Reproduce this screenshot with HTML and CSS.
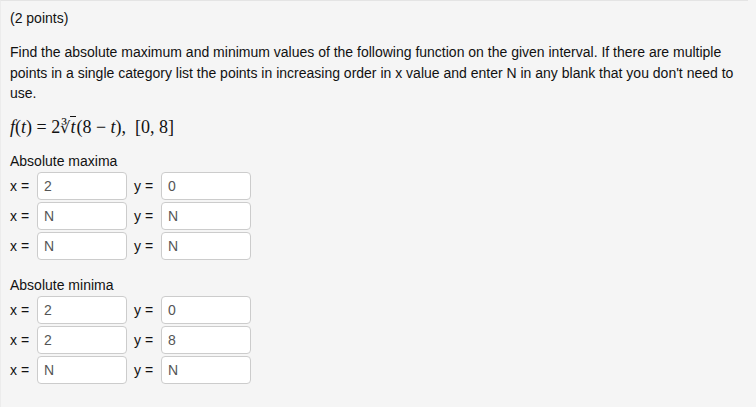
FILE: index.html
```html
<!DOCTYPE html>
<html lang="en">
  <head>
    <meta charset="UTF-8" />
    <meta name="viewport" content="width=device-width, initial-scale=1.0" />
    <title>Absolute extrema</title>
    <link rel="stylesheet" href="styles.css">
  </head>
  <body>
    <div class="problem">
      <!-- Header -->
      <p class="points">(2 points)</p>
      <!-- Question -->
      <p class="question">Find the absolute maximum and minimum values of the following function on the given interval. If there are multiple points in a single category list the points in increasing order in x value and enter N in any blank that you don't need to use.</p>
      <div class="formula">
        <i>f</i>(<i>t</i>) = 2<span class="root">∛</span><i class="under">t</i>(8 − <i>t</i>),&nbsp; [0, 8]
      </div>

      <!-- Maxima -->
      <div class="group">
        <div class="heading">Absolute maxima</div>
        <div class="row">
          <span class="label">x =</span><input class="answer" value="2">
          <span class="label y">y =</span><input class="answer" value="0">
        </div>
        <div class="row">
          <span class="label">x =</span><input class="answer" value="N">
          <span class="label y">y =</span><input class="answer" value="N">
        </div>
        <div class="row">
          <span class="label">x =</span><input class="answer" value="N">
          <span class="label y">y =</span><input class="answer" value="N">
        </div>
      </div>

      <!-- Minima -->
      <div class="group">
        <div class="heading">Absolute minima</div>
        <div class="row">
          <span class="label">x =</span><input class="answer" value="2">
          <span class="label y">y =</span><input class="answer" value="0">
        </div>
        <div class="row">
          <span class="label">x =</span><input class="answer" value="2">
          <span class="label y">y =</span><input class="answer" value="8">
        </div>
        <div class="row">
          <span class="label">x =</span><input class="answer" value="N">
          <span class="label y">y =</span><input class="answer" value="N">
        </div>
      </div>
    </div>
  </body>
</html>
```

FILE: styles.css
```css
body {
  margin: 0;
  font-family: "Liberation Sans", Arial, sans-serif;
  font-size: 14px;
  color: #111;
  background-color: #f5f5f5;
}
.problem {
  border-top: 1px solid #e4e4e4;
  border-left: 1px solid #ececec;
  padding: 7px 10px 0 9px;
  width: 728px;
  height: 400px;
}
.points {
  margin: 0;
  line-height: 20px;
}
.question {
  margin: 14px 0 0;
  line-height: 20.5px;
}
.formula {
  margin-top: 11px;
  font-family: "Liberation Serif", "Times New Roman", serif;
  font-size: 18px;
  line-height: 24px;
  height: 24px;
}
.root {
  font-family: "DejaVu Serif", serif;
  font-size: 16px;
}
.under {
  border-top: 1px solid #111;
  padding-right: 1px;
}
.group {
  margin-top: 12px;
}
.group + .group {
  margin-top: 15px;
}
.heading {
  line-height: 20px;
  margin-bottom: 1px;
}
.row {
  display: flex;
  align-items: center;
  height: 28px;
  margin-bottom: 2px;
}
.label {
  width: 27px;
}
.label.y {
  margin-left: 7px;
}
.answer {
  box-sizing: border-box;
  width: 90px;
  height: 28px;
  margin: 0;
  padding: 0 6px;
  border: 1px solid #cccccc;
  border-radius: 4px;
  background-color: white;
  font-family: "Liberation Sans", Arial, sans-serif;
  font-size: 14px;
  color: #555;
  outline: none;
}
```
